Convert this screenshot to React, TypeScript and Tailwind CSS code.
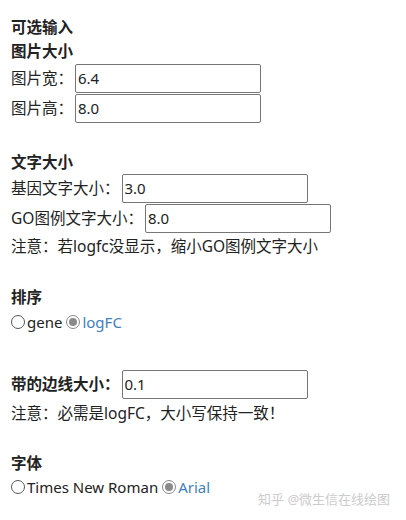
import React from 'react';

const font = { fontFamily: '"Noto Sans", "Noto Sans CJK SC", sans-serif' };

function Field({ label, value, bold }: { label: string; value: string; bold?: boolean }) {
  return (
    <div className="flex items-center h-[30px]">
      <span className={bold ? 'font-bold' : ''}>{label}</span>
      <input
        readOnly
        value={value}
        className="ml-[2px] w-[186px] h-[29px] border border-[#767676] rounded-[2px] px-[2px] text-[15px] text-[#222] outline-none"
        style={font}
      />
    </div>
  );
}

function Radio({ label, checked }: { label: string; checked?: boolean }) {
  return (
    <span className="inline-flex items-center">
      {checked ? (
        <span className="w-[14px] h-[14px] rounded-full border border-[#8a8a8a] flex items-center justify-center">
          <span className="w-[8px] h-[8px] rounded-full bg-[#8a8a8a]" />
        </span>
      ) : (
        <span className="w-[14px] h-[14px] rounded-full border border-[#555]" />
      )}
      <span className={checked ? 'ml-[2px] text-[#3f7fbf]' : 'ml-[2px]'}>{label}</span>
    </span>
  );
}

export default function App() {
  return (
    <div className="relative w-[406px] h-[520px] bg-white text-[#222] text-[15.5px] leading-[22px] pl-[11px] pt-[16px]" style={font}>
      <div className="font-bold">可选输入</div>
      <div className="font-bold mt-[2px]">图片大小</div>
      <div className="mt-[1px]">
        <Field label="图片宽：" value="6.4" />
        <Field label="图片高：" value="8.0" />
      </div>

      <div className="font-bold mt-[28px]">文字大小</div>
      <Field label="基因文字大小：" value="3.0" />
      <Field label="GO图例文字大小：" value="8.0" />
      <div className="mt-[2px]">注意：若logfc没显示，缩小GO图例文字大小</div>

      <div className="font-bold mt-[29px]">排序</div>
      <div className="flex items-center gap-[4px] mt-[3px] text-[15px]">
        <Radio label="gene" />
        <Radio label="logFC" checked />
      </div>

      <div className="mt-[36px]">
        <Field label="带的边线大小：" value="0.1" bold />
      </div>
      <div className="mt-[3px]">注意：必需是logFC，大小写保持一致！</div>

      <div className="font-bold mt-[28px]">字体</div>
      <div className="flex items-center gap-[4px] mt-[2px] text-[15px]">
        <Radio label="Times New Roman" />
        <Radio label="Arial" checked />
      </div>

      <div className="absolute left-[258px] top-[488px] text-[13px] text-[#cccccc]">知乎 @微生信在线绘图</div>
    </div>
  );
}
